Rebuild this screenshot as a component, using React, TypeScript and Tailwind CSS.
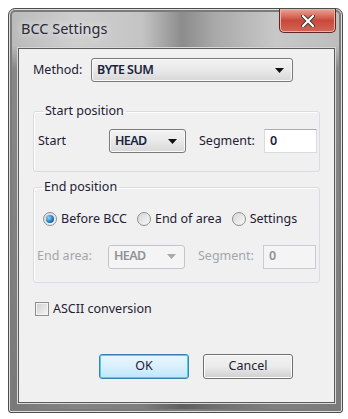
import React, {FC, ReactNode} from "react";

const font = {fontFamily: '"Noto Sans", "Open Sans", Arial, sans-serif'};

const Arrow = ({disabled}: { disabled?: boolean }) => (
    <svg width="9" height="5" viewBox="0 0 9 5" className="shrink-0">
        <path d="M0 0h9L4.5 5z" fill={disabled ? "#a8a8a8" : "#111"}/>
    </svg>
);

const Combo: FC<{ value: string; width: string; disabled?: boolean }> = ({value, width, disabled}) => (
    <div
        className={`${width} h-[24px] flex items-center justify-between pl-[5px] pr-[8px] rounded-[3px] border text-[12.5px] font-semibold tracking-[-0.6px] ${disabled
            ? "border-[#c3c6c9] bg-[#f4f4f4] text-[#8d929b]"
            : "border-[#7a7a7a] bg-gradient-to-b from-[#f3f3f3] via-[#e9e9e9] to-[#d8d8d8] text-[#1b2340] shadow-[inset_0_0_0_1px_#fafafa]"}`}>
        <span>{value}</span>
        <Arrow disabled={disabled}/>
    </div>
);

const TextBox: FC<{ value: string; disabled?: boolean }> = ({value, disabled}) => (
    <div
        className={`w-[53px] h-[24px] flex items-center pl-[5px] border text-[12.5px] font-semibold ${disabled
            ? "border-[#c8cbcf] bg-[#f4f4f4] text-[#8d929b]"
            : "border-[#d7dbe0] border-t-[#abadb3] bg-white text-[#1b2340]"}`}>
        {value}
    </div>
);

const Radio: FC<{ checked?: boolean; label: string }> = ({checked, label}) => (
    <div className="flex items-center gap-[4px]">
        <div
            className="size-[14px] rounded-full border border-[#8e8f8f] bg-gradient-to-br from-[#d6d6d6] to-[#f8f8f8] flex items-center justify-center">
            {checked && (
                <div
                    className="size-[8px] rounded-full bg-[radial-gradient(circle_at_35%_35%,#8fd6ff,#1b73b6_60%,#0d4c82)]"/>
            )}
        </div>
        <span>{label}</span>
    </div>
);

const GroupBox: FC<{ title: string; className?: string; children: ReactNode }> = ({title, className, children}) => (
    <fieldset
        className={`mx-[14px] border border-[#d9dde2] rounded-[3px] shadow-[inset_1px_1px_0_#ffffff] ${className ?? ""}`}>
        <legend className="ml-[5px] px-[2px] leading-[16px]">{title}</legend>
        {children}
    </fieldset>
);

const WinButton: FC<{ label: string; primary?: boolean }> = ({label, primary}) => (
    <div
        className={`w-[90px] h-[25px] flex items-center justify-center rounded-[3px] border ${primary
            ? "border-[#3c7fb1] bg-gradient-to-b from-[#eaf6fd] via-[#d9f0fc] to-[#bee6fd] shadow-[inset_0_0_0_1px_#48d0f5]"
            : "border-[#707070] bg-gradient-to-b from-[#f2f2f2] via-[#ebebeb] to-[#cfcfcf] shadow-[inset_0_0_0_1px_#fcfcfc]"}`}>
        {label}
    </div>
);

const App: FC = () => {
    return (
        <div className="w-[348px] h-[419px] bg-white pt-[8px] pl-[8px]" style={font}>
            {/* window frame */}
            <div
                className="w-[335px] h-[405px] rounded-t-[7px] rounded-b-[3px] border border-[#4d4d4d] bg-[linear-gradient(180deg,rgba(0,0,0,0)_0px,rgba(0,0,0,0)_36px,rgba(40,40,40,0.35)_60px,rgba(40,40,40,0.45)_100%),linear-gradient(90deg,#b9b9b9_0%,#cfcfcf_20%,#c4c4c4_40%,#8c8c8c_52%,#a9a9a9_62%,#c8c8c8_80%,#bdbdbd_100%)] shadow-[inset_0_0_0_1px_#e0e0e0,inset_0_0_0_3px_#7a7a7a] flex flex-col">
                {/* title bar */}
                <div className="h-[39px] flex items-start justify-between pl-[12px] pr-[6px]">
                    <span className="mt-[9px] text-[14.5px] text-[#2a2a3a] [text-shadow:0_0_8px_#ffffff]">BCC Settings</span>
                    <div
                        className="w-[57px] h-[24px] rounded-b-[5px] border border-t-0 border-[#5a2a22] bg-gradient-to-b from-[#e8a597] via-[#c9483a] to-[#d26654] shadow-[inset_0_0_0_1px_#f0b0a4] flex items-center justify-center">
                        <svg width="14" height="12" viewBox="0 0 14 12">
                            <path d="M2 1l10 10M12 1L2 11" stroke="#3a3a3a" strokeWidth="4" strokeLinecap="round"/>
                            <path d="M2 1l10 10M12 1L2 11" stroke="#ffffff" strokeWidth="2.2" strokeLinecap="round"/>
                        </svg>
                    </div>
                </div>
                {/* client area */}
                <div
                    className="ml-[9px] w-[317px] h-[355px] border border-[#5b5b5b] shadow-[0_0_0_1px_#d8d8d8] bg-[#f0f0f0] flex flex-col text-[12.5px] text-[#1e2133]">
                    <div className="mt-[9px] flex items-center pl-[14px]">
                        <span className="w-[58px]">Method:</span>
                        <Combo value="BYTE SUM" width="w-[202px]"/>
                    </div>

                    <GroupBox title="Start position" className="mt-[21px] h-[69px] pl-[4px]">
                        <div className="mt-[10px] flex items-center">
                            <span className="w-[71px]">Start</span>
                            <Combo value="HEAD" width="w-[77px]"/>
                            <span className="ml-[13px] w-[65px]">Segment:</span>
                            <TextBox value="0"/>
                        </div>
                    </GroupBox>

                    <GroupBox title="End position" className="mt-[7px] h-[104px] pl-[3px]">
                        <div className="mt-[15px] ml-[6px] flex items-center">
                            <Radio checked label="Before BCC"/>
                            <div className="ml-[10px]"><Radio label="End of area"/></div>
                            <div className="ml-[10px]"><Radio label="Settings"/></div>
                        </div>
                        <div className="mt-[16px] flex items-center text-[#a3a7ad]">
                            <span className="w-[71px]">End area:</span>
                            <Combo value="HEAD" width="w-[77px]" disabled/>
                            <span className="ml-[13px] w-[65px]">Segment:</span>
                            <TextBox value="0" disabled/>
                        </div>
                    </GroupBox>

                    <div className="mt-[17px] ml-[16px] flex items-center gap-[4px]">
                        <div
                            className="size-[14px] border border-[#8e8f8f] bg-gradient-to-br from-[#cfcfcf] to-[#f6f6f6] shadow-[inset_0_0_0_1px_#f4f4f4]"/>
                        <span>ASCII conversion</span>
                    </div>

                    <div className="mt-[35px] ml-[80px] flex gap-[14px]">
                        <WinButton label="OK" primary/>
                        <WinButton label="Cancel"/>
                    </div>
                </div>
            </div>
        </div>
    );
};

export default App;
